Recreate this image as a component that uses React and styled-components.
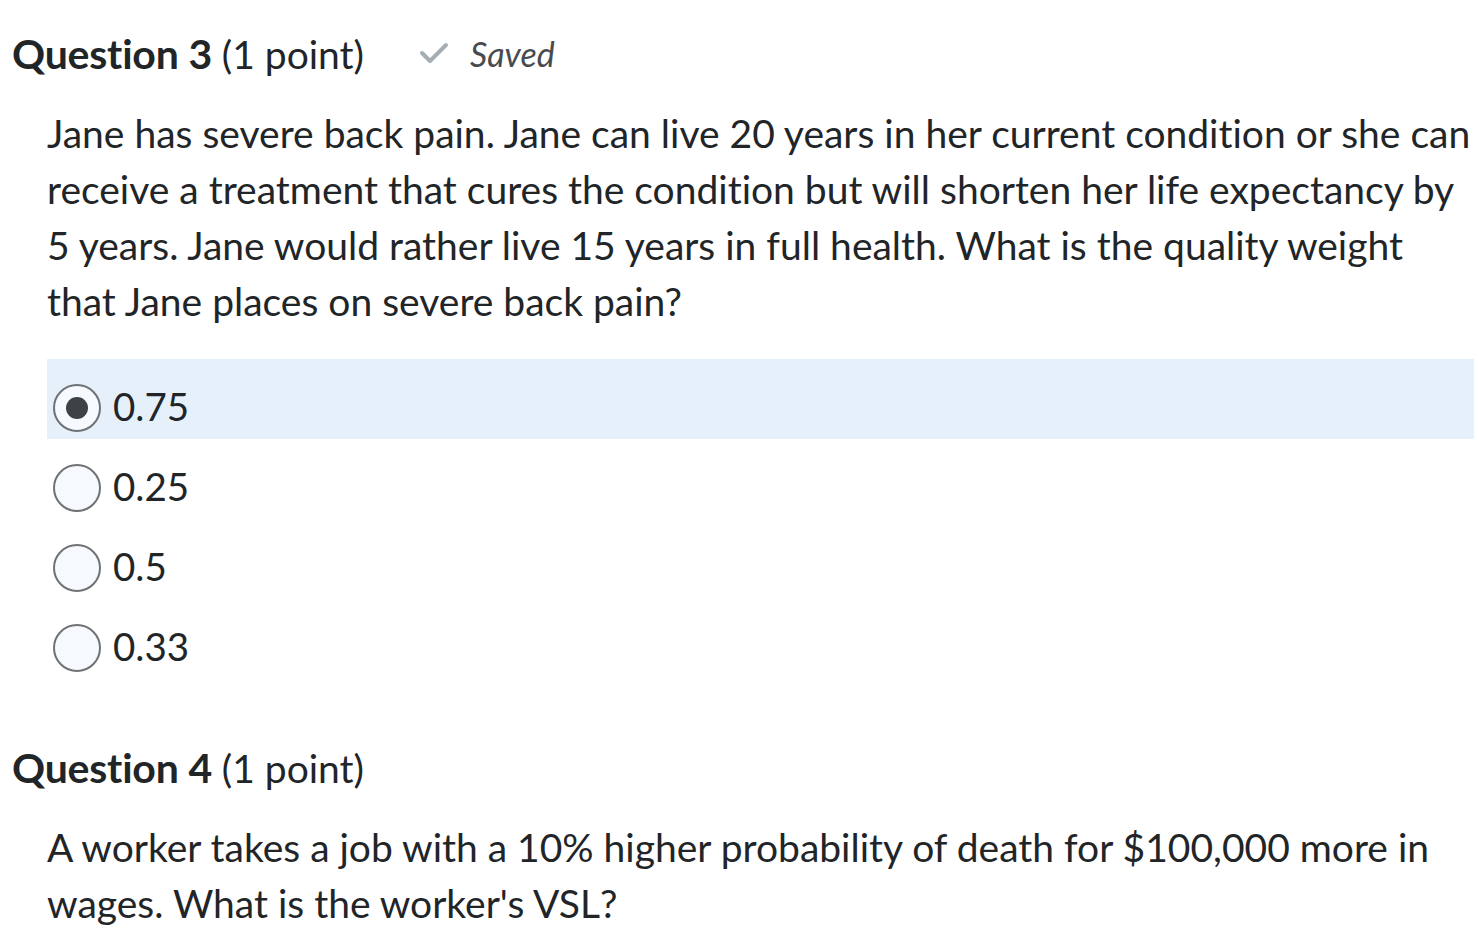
import React from 'react';
import styled, { createGlobalStyle } from 'styled-components';

const GlobalStyle = createGlobalStyle`
  html, body {
    margin: 0;
    padding: 0;
    background: #ffffff;
  }
  body {
    font-family: Lato, "Noto Sans", sans-serif;
    font-variant-ligatures: none;
    color: #222528;
  }
`;

const Page = styled.div`
  width: 1478px;
  padding: 28px 0 0 12px;
  box-sizing: border-box;
`;

const Question = styled.section`
  display: flex;
  flex-direction: column;
  margin-bottom: ${p => p.gap || 0}px;
`;

const Header = styled.div`
  display: flex;
  align-items: center;
  height: 50px;
`;

const Title = styled.h2`
  margin: 0;
  font-size: 41px;
  font-weight: 700;
  letter-spacing: -0.2px;
  color: #222528;
`;

const Points = styled.span`
  font-weight: 400;
  font-size: 39px;
  letter-spacing: 0;
`;

const SavedTag = styled.span`
  display: flex;
  align-items: center;
  gap: 21px;
  margin-left: 55px;
  font-size: 34px;
  font-style: italic;
  color: #474b4f;
`;

const Body = styled.p`
  margin: 27px 0 0 35px;
  font-size: 39px;
  line-height: 56px;
  color: #222528;
`;

const Options = styled.div`
  display: flex;
  flex-direction: column;
  margin: 30px 4px 0 35px;
`;

const Option = styled.label`
  display: flex;
  align-items: center;
  box-sizing: border-box;
  height: 80px;
  padding: 14px 0 0 6px;
  gap: 12px;
  background: ${p => (p.selected ? '#e5f0fb' : 'transparent')};
  font-size: 38.5px;
  color: #222528;
`;

const Radio = styled.span`
  width: 44px;
  height: 44px;
  margin-top: 4px;
  border-radius: 50%;
  border: 2px solid #6f7275;
  background: #f6faff;
  display: flex;
  align-items: center;
  justify-content: center;
  flex-shrink: 0;
`;

const Dot = styled.span`
  width: 22px;
  height: 22px;
  border-radius: 50%;
  background: #3e4246;
`;

const Check = () => (
  <svg width="30" height="22" viewBox="0 0 30 22" fill="none">
    <path d="M3 11 L11 19 L27 3" stroke="#a7aeb3" strokeWidth="4" strokeLinecap="round" strokeLinejoin="round" />
  </svg>
);

const options = ['0.75', '0.25', '0.5', '0.33'];

export default function App() {
  return (
    <>
      <GlobalStyle />
      <Page>
        <Question gap={63}>
          <Header>
            <Title>
              Question 3 <Points>(1 point)</Points>
            </Title>
            <SavedTag>
              <Check />
              Saved
            </SavedTag>
          </Header>
          <Body>
            Jane has severe back pain. Jane can live 20 years in her current condition or she can
            receive a treatment that cures the condition but will shorten her life expectancy by
            5 years. Jane would rather live 15 years in full health. What is the quality weight
            that Jane places on severe back pain?
          </Body>
          <Options>
            {options.map((o, i) => (
              <Option key={o} selected={i === 0}>
                <Radio>{i === 0 && <Dot />}</Radio>
                {o}
              </Option>
            ))}
          </Options>
        </Question>
        <Question>
          <Header>
            <Title>
              Question 4 <Points>(1 point)</Points>
            </Title>
          </Header>
          <Body>
            A worker takes a job with a 10% higher probability of death for $100,000 more in
            wages. What is the worker's VSL?
          </Body>
        </Question>
      </Page>
    </>
  );
}
